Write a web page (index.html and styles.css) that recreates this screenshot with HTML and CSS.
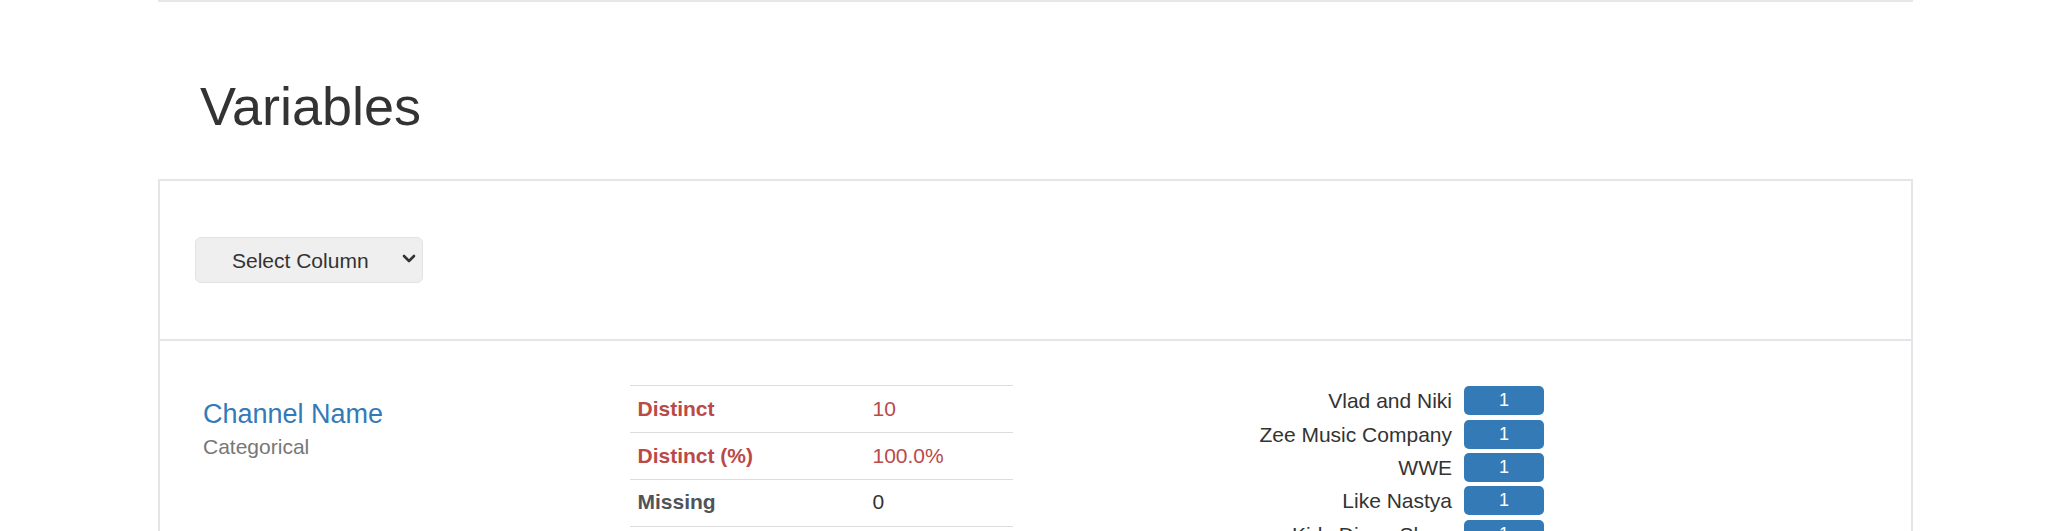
FILE: index.html
```html
<!DOCTYPE html>
<html lang="en">
<head>
<meta charset="utf-8">
<title>Variables</title>
<link rel="stylesheet" href="styles.css">
</head>
<body>
<div class="container">
  <div class="topline"></div>
  <h1 class="page-title">Variables</h1>
  <div class="panel">
    <div class="panel-heading">
      <span class="select-wrap">
        <select class="select-column">
          <option>Select Column</option>
          <option>Channel Name</option>
        </select>
        <svg class="chevron" width="14" height="9" viewBox="0 0 14 9" aria-hidden="true"><path d="M2 2 L7 7 L12 2" fill="none" stroke="#333" stroke-width="2.6" stroke-linecap="round" stroke-linejoin="round"/></svg>
      </span>
    </div>
    <div class="panel-body">
      <div class="var-grid">
        <div class="var-name">
          <a class="var-title" href="#">Channel Name</a>
          <div class="var-type">Categorical</div>
        </div>
        <table class="stats">
          <tbody>
            <tr class="alert-row"><th>Distinct</th><td>10</td></tr>
            <tr class="alert-row"><th>Distinct (%)</th><td>100.0%</td></tr>
            <tr><th>Missing</th><td>0</td></tr>
          </tbody>
        </table>
        <div class="freq">
          <div class="freq-row"><span class="freq-name">Vlad and Niki</span><span class="freq-bar">1</span></div>
          <div class="freq-row"><span class="freq-name">Zee Music Company</span><span class="freq-bar">1</span></div>
          <div class="freq-row"><span class="freq-name">WWE</span><span class="freq-bar">1</span></div>
          <div class="freq-row"><span class="freq-name">Like Nastya</span><span class="freq-bar">1</span></div>
          <div class="freq-row"><span class="freq-name">Kids Diana Show</span><span class="freq-bar">1</span></div>
        </div>
      </div>
    </div>
  </div>
</div>
</body>
</html>
```

FILE: styles.css
```css
html, body {
  margin: 0;
  padding: 0;
  background: #ffffff;
  overflow: hidden;
}

body {
  font-family: "Liberation Sans", Arial, Helvetica, sans-serif;
  color: #333333;
  font-size: 21px;
}

.container {
  margin-left: 158px;
  width: 1755px;
}

.topline {
  height: 2px;
  background: #e6e6eb;
}

.page-title {
  margin: 75px 0 43px 0;
  padding-left: 42px;
  font-size: 54px;
  line-height: 1.1;
  font-weight: 400;
  color: #333333;
}

.panel {
  border: 2px solid #e4e4e9;
  border-bottom: none;
}

.panel-heading {
  padding: 56px 35px;
  border-bottom: 2px solid #e4e4e9;
}

.select-wrap {
  position: relative;
  display: inline-block;
  vertical-align: top;
}

.select-column {
  appearance: none;
  -webkit-appearance: none;
  display: block;
  width: 228px;
  height: 46px;
  margin: 0;
  padding: 0 0 0 36px;
  background: #efefef;
  border: 1px solid #e3e3e3;
  border-radius: 6px;
  font-family: "Liberation Sans", Arial, sans-serif;
  font-size: 21px;
  color: #333333;
}

.chevron {
  position: absolute;
  left: 207px;
  top: 17px;
}

.panel-body {
  padding: 44px 35px 0 35px;
}

.var-grid {
  display: grid;
  grid-template-columns: 435px 383px 1fr;
  align-items: start;
}

.var-name {
  padding: 14px 0 0 8px;
}

.var-title {
  display: block;
  font-size: 27px;
  line-height: 30px;
  color: #337ab7;
  text-decoration: none;
}

.var-type {
  margin-top: 3px;
  font-size: 21px;
  line-height: 30px;
  color: #777777;
}

.stats {
  width: 383px;
  border-collapse: collapse;
  font-size: 21px;
}

.stats th,
.stats td {
  padding: 7.5px 7.5px;
  line-height: 30.7px;
  border-top: 1px solid #dcdcdc;
  text-align: left;
  vertical-align: top;
}

.stats th {
  width: 220px;
  font-weight: 700;
  color: #505459;
}

.stats td {
  color: #333333;
}

.stats tr:last-child th,
.stats tr:last-child td {
  border-bottom: 1px solid #dcdcdc;
}

.stats .alert-row th,
.stats .alert-row td {
  color: #b94a48;
}

.freq {
  display: flex;
  flex-direction: column;
  gap: 4.3px;
  padding-top: 1px;
}

.freq-row {
  display: grid;
  grid-template-columns: 439px 80px;
  column-gap: 12px;
  height: 29px;
}

.freq-name {
  text-align: right;
  white-space: nowrap;
  font-size: 21px;
  line-height: 29px;
  color: #333333;
}

.freq-bar {
  background: #337ab7;
  border-radius: 5px;
  color: #ffffff;
  text-align: center;
  font-size: 18px;
  line-height: 29px;
}
```
